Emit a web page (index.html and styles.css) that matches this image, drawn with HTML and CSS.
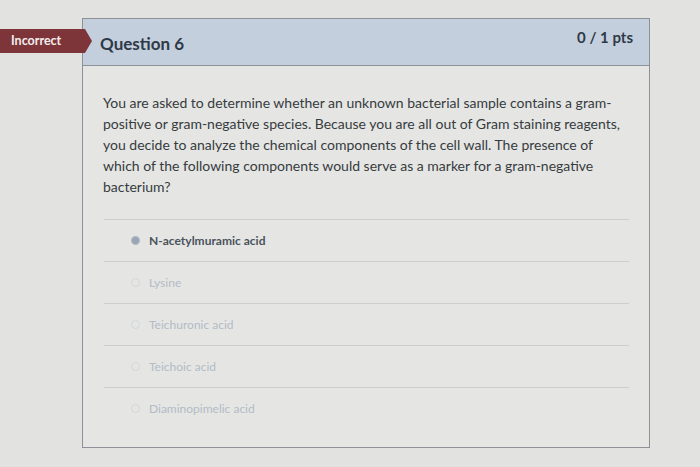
FILE: index.html
```html
<!DOCTYPE html>
<html>
<head>
<meta charset="utf-8">
<link rel="stylesheet" href="styles.css">
</head>
<body>
<div class="page">
  <div class="side">
    <div class="badge">Incorrect</div>
  </div>
  <div class="card">
    <div class="card-head">
      <div class="title">Question 6</div>
      <div class="pts">0 / 1 pts</div>
    </div>
    <div class="card-body">
      <p class="question">You are asked to determine whether an unknown bacterial sample contains a gram-positive or gram-negative species. Because you are all out of Gram staining reagents, you decide to analyze the chemical components of the cell wall. The presence of which of the following components would serve as a marker for a gram-negative bacterium?</p>
      <div class="answers">
        <div class="answer selected"><span class="radio"></span><span class="label">N-acetylmuramic acid</span></div>
        <div class="answer"><span class="radio"></span><span class="label">Lysine</span></div>
        <div class="answer"><span class="radio"></span><span class="label">Teichuronic acid</span></div>
        <div class="answer"><span class="radio"></span><span class="label">Teichoic acid</span></div>
        <div class="answer last"><span class="radio"></span><span class="label">Diaminopimelic acid</span></div>
      </div>
    </div>
  </div>
</div>
</body>
</html>
```
FILE: styles.css
```css
html, body {
  margin: 0;
  padding: 0;
  background: #e2e3e0;
  font-family: Lato, "Open Sans", sans-serif;
}
.page {
  display: flex;
  align-items: flex-start;
  padding-top: 18px;
  height: 449px;
  box-sizing: border-box;
}
.side {
  width: 82px;
  flex: none;
  position: relative;
  z-index: 2;
}
.badge {
  position: relative;
  margin-top: 11px;
  width: 85px;
  height: 24px;
  background: #7e3539;
  color: #f4eeee;
  font-size: 12.5px;
  font-weight: bold;
  line-height: 24px;
  padding-left: 11px;
  box-sizing: border-box;
}
.badge::after {
  content: "";
  position: absolute;
  left: 85px;
  top: 0;
  border-top: 12px solid transparent;
  border-bottom: 12px solid transparent;
  border-left: 7px solid #7e3539;
}
.card {
  width: 568px;
  height: 430px;
  border: 1px solid #8d9197;
  box-sizing: border-box;
  background: #e5e6e3;
  display: flex;
  flex-direction: column;
}
.card-head {
  height: 47px;
  flex: none;
  background: #c4cfde;
  border-bottom: 1px solid #8b9198;
  box-sizing: border-box;
  display: flex;
  justify-content: space-between;
  align-items: center;
  padding: 0 16px 0 17px;
  color: #2e3a46;
  font-weight: bold;
}
.title {
  font-size: 17px;
  padding-top: 3px;
}
.pts {
  font-size: 15px;
  padding-bottom: 10px;
}
.card-body {
  padding: 26px 20px 0 20px;
}
.question {
  margin: 0 0 22px 0;
  font-size: 14px;
  line-height: 21px;
  color: #363b40;
  width: 525px;
}
.answers {
  margin-left: 1px;
}
.answer {
  height: 42px;
  border-top: 1px solid #cdcfcf;
  box-sizing: border-box;
  display: flex;
  align-items: center;
  padding-left: 27px;
  font-size: 12px;
  color: #b2bbc6;
}
.radio {
  width: 9px;
  height: 9px;
  border-radius: 50%;
  border: 1px solid #d3d7dc;
  box-sizing: border-box;
  margin-right: 9px;
}
.selected {
  color: #4a525c;
  font-weight: bold;
}
.selected .radio {
  background: #9aa6b6;
  border-color: #aeb8c5;
}
```
